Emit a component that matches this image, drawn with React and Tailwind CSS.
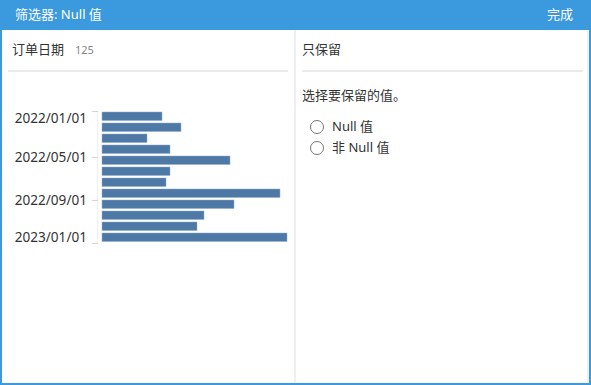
import React from 'react';

const bars = [60, 79, 45, 68, 128, 68, 64, 178, 132, 102, 95, 185];

const labels = [
  { text: '2022/01/01', y: 22.5 },
  { text: '2022/05/01', y: 61.5 },
  { text: '2022/09/01', y: 104.5 },
  { text: '2023/01/01', y: 141.5 },
];

const ticks = [11, 57, 100, 143];

const DateChart = () => (
  <svg width="292" height="150" className="block">
    <line x1="95.5" y1="11" x2="95.5" y2="143" stroke="#f0f0f0" strokeWidth="1" />
    {ticks.map((t) => (
      <line key={t} x1="90" y1={t + 0.5} x2="96" y2={t + 0.5} stroke="#d4d4d4" strokeWidth="1" />
    ))}
    {labels.map((l) => (
      <text
        key={l.text}
        x="85"
        y={l.y}
        textAnchor="end"
        fontSize="13.6"
        fill="#333"
        fontFamily="'Noto Sans', 'Noto Sans CJK SC', sans-serif"
      >
        {l.text}
      </text>
    ))}
    {bars.map((w, i) => (
      <rect
        key={i}
        x="100"
        y={12 + i * 11}
        width={w}
        height="8.5"
        fill="#4e79a7"
        stroke="#8fadcc"
        strokeWidth="0.5"
      />
    ))}
  </svg>
);

const Radio = ({ label }) => (
  <label className="flex items-center h-[21px] pl-[14px] gap-[8px] cursor-pointer">
    <span className="w-[14px] h-[14px] rounded-full border border-[#767676] bg-white" />
    <span className="text-[13px] text-[#333]">{label}</span>
  </label>
);

export default function App() {
  return (
    <div
      className="w-[591px] h-[385px] flex flex-col bg-white"
      style={{ fontFamily: "'Noto Sans', 'Noto Sans CJK SC', sans-serif" }}
    >
      {/* Header */}
      <div className="h-[30px] shrink-0 bg-[#3b99dd] flex items-center justify-between pl-[15px] pr-[18px] text-white text-[13px]">
        <span>筛选器: Null 值</span>
        <span>完成</span>
      </div>

      <div className="flex-1 flex border-x-2 border-b-2 border-[#3b99dd] min-h-0">
        {/* Left panel */}
        <div className="w-[292px] shrink-0 flex flex-col">
          <div className="h-[40px] flex items-center pl-[10px] gap-[11px]">
            <span className="text-[13px] text-[#333]">订单日期</span>
            <span className="text-[11px] text-[#888]">125</span>
          </div>
          <div className="mx-[6px] h-[2px] bg-[#ebebeb]" />
          <div className="mt-[28px]">
            <DateChart />
          </div>
        </div>

        <div className="w-[2px] shrink-0 bg-[#efefef]" />

        {/* Right panel */}
        <div className="flex-1 flex flex-col border-r-2 border-[#efefef]">
          <div className="h-[40px] flex items-center pl-[6px]">
            <span className="text-[13px] text-[#333]">只保留</span>
          </div>
          <div className="ml-[6px] mr-[4px] h-[2px] bg-[#ebebeb]" />
          <p className="mt-[14px] pl-[6px] text-[13px] leading-[18px] text-[#333]">选择要保留的值。</p>
          <div className="mt-[12px] flex flex-col">
            <Radio label="Null 值" />
            <Radio label="非 Null 值" />
          </div>
        </div>
      </div>
    </div>
  );
}
